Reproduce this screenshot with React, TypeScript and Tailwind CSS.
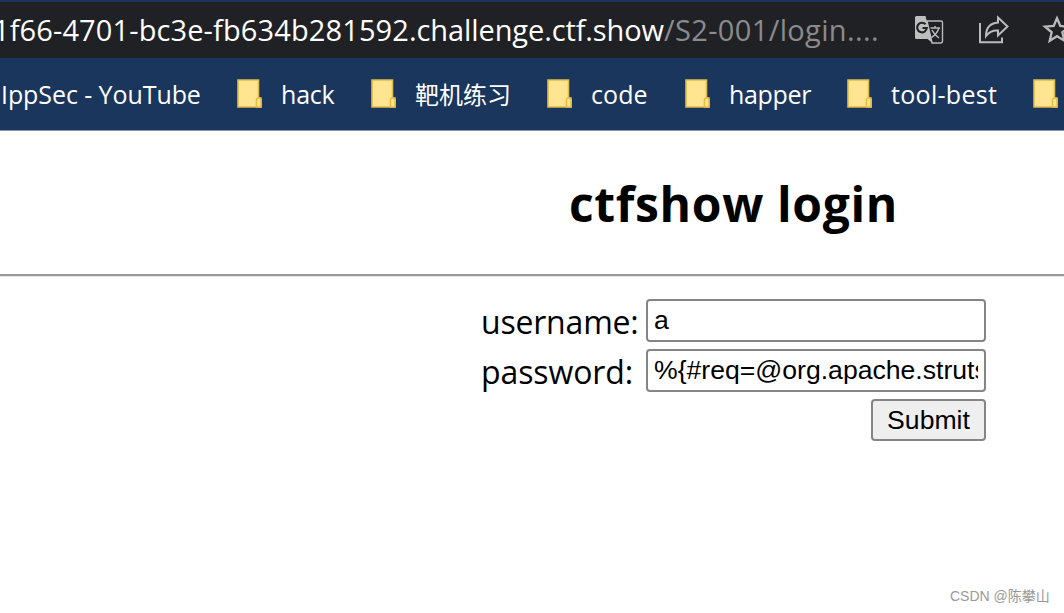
import React from 'react';

interface FolderItem {
  name: string;
  slot: string;
  text: string;
}

const folders: FolderItem[] = [
  { name: 'hack', slot: 'w-[134px]', text: 'tracking-[-0.2px]' },
  { name: '靶机练习', slot: 'w-[176px]', text: 'text-[24px]' },
  { name: 'code', slot: 'w-[138px]', text: 'tracking-[0.1px]' },
  { name: 'happer', slot: 'w-[162px]', text: 'tracking-[-0.3px]' },
  { name: 'tool-best', slot: 'w-[186px]', text: 'tracking-[0.3px]' },
  { name: '', slot: 'w-[40px]', text: '' },
];

const FolderIcon: React.FC = () => (
  <svg width="26" height="30" viewBox="0 0 26 30" className="shrink-0">
    <path d="M1 1H21.500V19H24V28H1Z" fill="#ffe591" stroke="#dfbb4b" strokeWidth="1.600" />
    <path d="M19.500 28V21Q19.500 19 21.500 19Q24 19 24 21V28Z" fill="#ffe591" stroke="#e5be45" strokeWidth="1.600" />
  </svg>
);

const TranslateIcon: React.FC = () => (
  <svg width="30" height="30" viewBox="0 0 30 30" className="shrink-0">
    <path d="M13 6H27Q28.500 6 28.500 7.500V26Q28.500 28 26.500 28H18L13 6Z" fill="none" stroke="#b9babb" strokeWidth="1.400" />
    <path d="M2.500 1H11.500L18.500 28L13.500 24H2.500Q1 24 1 22.500V2.500Q1 1 2.500 1Z" fill="#bdbebe" />
    <path d="M11.500 9.200A4.800 4.800 0 1 0 12.800 13H8.500" fill="none" stroke="#202124" strokeWidth="2.100" />
    <path d="M16.500 13H26M21 11V13M25 13Q23 19 17.500 22.500M18 15Q20 19.500 25 23" fill="none" stroke="#b9babb" strokeWidth="1.500" />
  </svg>
);

const ShareIcon: React.FC = () => (
  <svg width="32" height="30" viewBox="0 0 32 30" className="shrink-0">
    <path d="M2 8V27.300H24V22.500" fill="none" stroke="#b9babb" strokeWidth="2" />
    <path d="M20 2.500L29.500 11.500L20 20.500V15.500Q12.500 15 8 21Q8 8.500 20 7.500Z" fill="none" stroke="#b9babb" strokeWidth="2" />
  </svg>
);

const StarIcon: React.FC = () => (
  <svg width="30" height="30" viewBox="0 0 30 30" className="shrink-0">
    <path d="M15 3.200L18.300 11L27 11.700L20.300 17.300L22.300 25.700L15 21.200L7.700 25.700L9.700 17.300L3 11.700L11.700 11Z" fill="none" stroke="#b9babb" strokeWidth="2.300" />
  </svg>
);

const App: React.FC = () => {
  return (
    <div className="flex h-[613px] w-[1064px] flex-col overflow-hidden bg-white font-['Open_Sans','Noto_Sans_CJK_SC',sans-serif] text-black">
      <header className="h-[131px] shrink-0 border-b border-[#8494ad] bg-[#1a365d]">
        <div className="mt-[2px] flex h-[56px] items-center overflow-hidden bg-[#202124]">
          <div className="flex w-[664px] shrink-0 justify-end whitespace-nowrap text-[29px] leading-[54px] text-white">
            <span className="tracking-[0.12px]">1f66-4701-bc3e-fb634b281592</span>
            <span className="tracking-[-0.1px]">.challenge.ctf.show</span>
          </div>
          <div className="w-[250px] shrink-0 whitespace-nowrap text-[29px] leading-[54px] tracking-[0.35px] text-[#8a8b8d]">
            /S2-001/login....
          </div>
          <div className="flex shrink-0 items-center">
            <TranslateIcon />
            <div className="ml-[34px]"><ShareIcon /></div>
            <div className="ml-[32px]"><StarIcon /></div>
          </div>
        </div>
        <nav className="flex h-[72px] items-center whitespace-nowrap text-[25px] text-white">
          <span className="w-[237px] shrink-0 pl-[1px] pt-[2px] tracking-[-0.08px]">IppSec - YouTube</span>
          {folders.map((folder, index) => (
            <div key={index} className={`flex shrink-0 items-center gap-[18px] ${folder.slot}`}>
              <FolderIcon />
              <span className={`pt-[2px] ${folder.text}`}>{folder.name}</span>
            </div>
          ))}
        </nav>
      </header>

      <main className="flex-1">
        <h2 className="flex h-[143px] items-center pl-[569px] pt-[3px] text-[48px] font-bold leading-[60px] tracking-[0.65px]">ctfshow login</h2>
        <div className="h-[3px] border-b border-t-2 border-b-[#e4e4e4] border-t-[#999999]" />
        <form className="ml-[481px] mt-[22px] flex w-[505px] flex-col gap-[7px]" onSubmit={(e) => e.preventDefault()}>
          <label className="flex h-[43px] items-center">
            <span className="w-[165px] shrink-0 pt-[2px] text-[32px] leading-[43px] tracking-[-0.2px]">username:</span>
            <input
              defaultValue="a"
              className="h-[43px] w-[340px] rounded-[4px] border-2 border-[#858585] px-[6px] font-['Liberation_Sans',sans-serif] text-[26.6px] outline-none"
            />
          </label>
          <label className="flex h-[43px] items-center">
            <span className="w-[165px] shrink-0 pt-[2px] text-[32px] leading-[43px] tracking-[-0.1px]">password:</span>
            <input
              defaultValue="%{#req=@org.apache.struts2"
              className="h-[43px] w-[340px] rounded-[4px] border-2 border-[#858585] px-[6px] font-['Liberation_Sans',sans-serif] text-[26.6px] outline-none"
            />
          </label>
          <button className="h-[42px] w-[115px] self-end rounded-[4px] border-2 border-[#858585] bg-[#efefef] pb-[1px] font-['Liberation_Sans',sans-serif] text-[26.6px] leading-[36px]">
            Submit
          </button>
        </form>
        <footer className="mt-[145px] pl-[950px] text-[14px] leading-[20px] text-[#999999]">
          <span className="font-['Liberation_Sans','Noto_Sans_CJK_SC',sans-serif]">CSDN @陈攀山</span>
        </footer>
      </main>
    </div>
  );
};

export default App;
